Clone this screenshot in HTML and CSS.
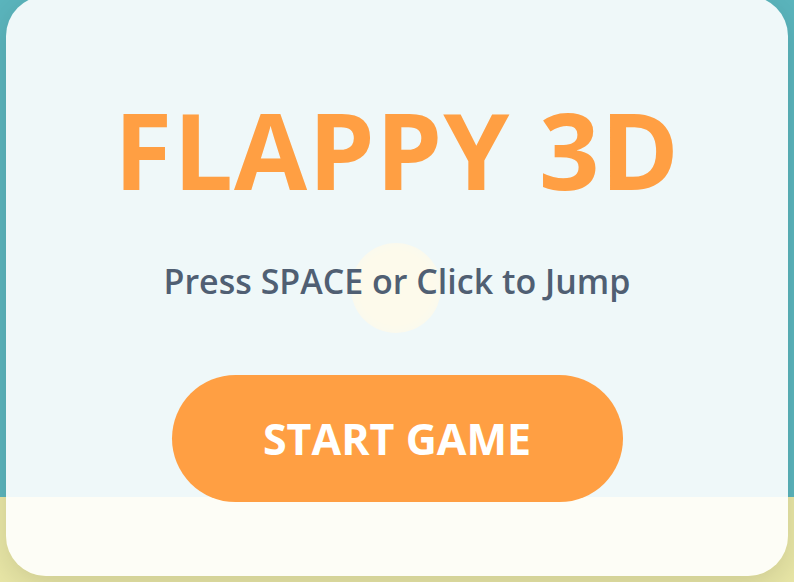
FILE: index.html
```html
<!DOCTYPE html>
<html lang="en">
<head>
    <meta charset="utf-8">
    <title>Flappy 3D</title>
    <link rel="stylesheet" href="styles.css">
</head>
<body>
    <div class="escena">
        <div class="suelo"></div>
        <div class="pajaro"></div>

        <div class="menu">
            <h1 class="titulo">FLAPPY 3D</h1>
            <p class="ayuda">Press SPACE or Click to Jump</p>
            <button class="boton" type="button">START GAME</button>
        </div>
    </div>
</body>
</html>
```

FILE: styles.css
```css
body{
    margin: 0;
    overflow: hidden;
}

*{font-family: "Open Sans", "Noto Sans", sans-serif;}

.escena{
    position: relative;
    width: 794px;
    height: 582px;
    background-color: rgb(91, 181, 189);
    display: flex;
    justify-content: center;
    align-items: center;
}

.suelo{
    position: absolute;
    left: 0;
    right: 0;
    bottom: 0;
    height: 85px;
    background-color: rgb(232, 230, 166);
}

.pajaro{
    position: absolute;
    left: 351px;
    top: 243px;
    width: 90px;
    height: 90px;
    border-radius: 50%;
    background: radial-gradient(circle, rgb(235, 200, 50) 55%, rgba(235, 200, 50, 0.4) 100%);
}

.menu{
    position: relative;
    width: 782px;
    height: 580px;
    margin-top: -10px;
    box-sizing: border-box;
    background-color: rgba(255, 255, 255, 0.9);
    border-radius: 40px;
    box-shadow: 0 8px 30px rgba(0, 0, 0, 0.12);
    display: flex;
    flex-direction: column;
    align-items: center;
    padding-top: 88px;
}

.titulo{
    margin: 0;
    font-size: 106px;
    font-weight: 700;
    line-height: 130px;
    color: rgb(255, 159, 67);
    letter-spacing: 1px;
}

.ayuda{
    margin: 0;
    margin-top: 44px;
    font-size: 34px;
    font-weight: 600;
    color: rgb(80, 95, 115);
}

.boton{
    margin-top: 71px;
    width: 451px;
    height: 127px;
    border: none;
    border-radius: 64px;
    background-color: rgb(255, 159, 67);
    color: white;
    font-size: 43px;
    font-weight: 700;
}
```
